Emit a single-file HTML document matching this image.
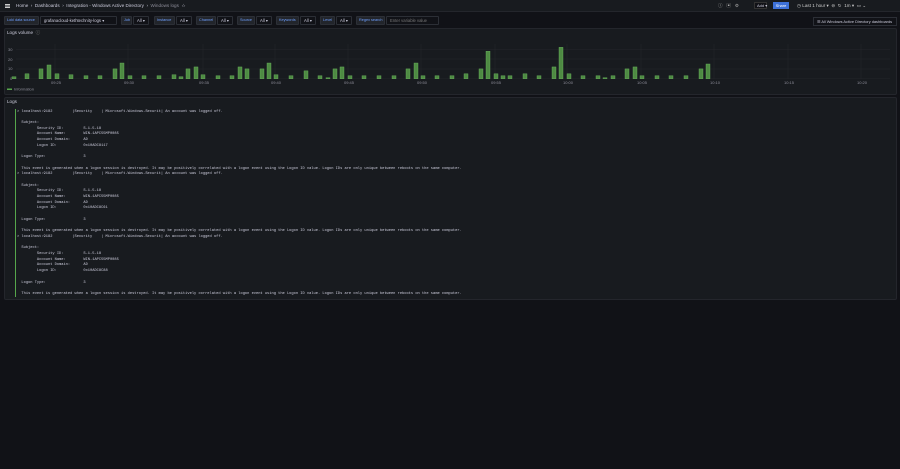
<!DOCTYPE html>
<html><head><meta charset="utf-8"><style>
*{box-sizing:border-box;margin:0;padding:0}
body{width:900px;height:469px;background:#111217;font-family:"Liberation Sans",sans-serif;color:#ccccdc;position:relative;overflow:hidden}
.a{position:absolute;white-space:nowrap}
.top{left:0;top:0;width:900px;height:12px;background:#181b1f;border-bottom:1px solid #24262c}
.t{font-size:4.6px}
.lbl,.val{white-space:nowrap;overflow:hidden}
.lbl{position:absolute;height:9px;top:16px;background:#22252b;border:1px solid #2c2f36;color:#6e9fff;font-size:3.8px;line-height:7px;padding:0 2px;border-radius:1px}
.val{position:absolute;height:9px;top:16px;background:#111217;border:1px solid #2c2f36;color:#ccccdc;font-size:4.2px;line-height:7px;padding:0 3px;border-radius:1px}
.panel{position:absolute;background:#181b1f;border:1px solid #24262c;border-radius:2px}
.mono{font-family:"Liberation Mono",monospace;font-size:3.7px;line-height:5.7px;color:#ccccdc;white-space:pre}
</style></head><body>
<div class="a top"></div>
<div class="a" style="left:5px;top:4px;width:5px;height:1px;background:#ccc;box-shadow:0 1.5px 0 #ccc,0 3px 0 #ccc"></div>
<div class="a t" style="left:16px;top:3px;color:#ccccdc">Home &nbsp;›&nbsp; Dashboards &nbsp;›&nbsp; Integration - Windows Active Directory &nbsp;›&nbsp; <span style="color:#8e8e9a">Windows logs</span> &nbsp;☆</div>
<div class="a t" style="left:718px;top:3px;color:#aaa">ⓘ &nbsp; ▣ &nbsp; ⚙</div>
<div class="a" style="left:754px;top:2px;width:13px;height:7px;background:#111217;border:1px solid #333;font-size:4px;line-height:5px;padding-left:2px">Add ▾</div>
<div class="a" style="left:773px;top:2px;width:16px;height:7px;background:#3d71d9;font-size:4px;line-height:7px;color:#fff;text-align:center">Share</div>
<div class="a t" style="left:797px;top:3px;color:#ccc">◷ Last 1 hour ▾ &nbsp;⊖ &nbsp;↻ &nbsp;1m ▾ &nbsp;▭ ⌄</div>

<div class="lbl" style="left:4px;width:35px">Loki data source</div>
<div class="val" style="left:40px;width:77px">grafanacloud-kethtechnity-logs ▾</div>
<div class="lbl" style="left:121px;width:11px">Job</div>
<div class="val" style="left:133px;width:16px">All ▾</div>
<div class="lbl" style="left:154px;width:21px">Instance</div>
<div class="val" style="left:176px;width:16px">All ▾</div>
<div class="lbl" style="left:196px;width:20px">Channel</div>
<div class="val" style="left:217px;width:16px">All ▾</div>
<div class="lbl" style="left:237px;width:18px">Source</div>
<div class="val" style="left:256px;width:16px">All ▾</div>
<div class="lbl" style="left:276px;width:23px">Keywords</div>
<div class="val" style="left:300px;width:16px">All ▾</div>
<div class="lbl" style="left:320px;width:15px">Level</div>
<div class="val" style="left:336px;width:16px">All ▾</div>
<div class="lbl" style="left:356px;width:29px">Regex search</div>
<div class="val" style="left:386px;width:53px;color:#777">Enter variable value</div>
<div class="a" style="left:813px;top:17px;width:84px;height:9px;background:#111217;border:1px solid #2c2f36;font-size:3.9px;line-height:7px;padding-left:3px;overflow:hidden">☰ All Windows Active Directory dashboards</div>

<div class="panel" style="left:4px;top:28px;width:893px;height:67px"></div>
<div class="a t" style="left:7px;top:30px">Logs volume &nbsp;<span style="color:#888">ⓘ</span></div>
<svg class="a" style="left:0;top:0" width="900" height="100">
<g stroke="#24262c" stroke-width="0.5">
<line x1="16" y1="49.5" x2="890" y2="49.5"/><line x1="16" y1="59" x2="890" y2="59"/><line x1="16" y1="69" x2="890" y2="69"/><line x1="16" y1="78.7" x2="890" y2="78.7"/>
<line x1="55" y1="44" x2="55" y2="79"/><line x1="128" y1="44" x2="128" y2="79"/><line x1="203" y1="44" x2="203" y2="79"/><line x1="275" y1="44" x2="275" y2="79"/><line x1="348" y1="44" x2="348" y2="79"/><line x1="421" y1="44" x2="421" y2="79"/><line x1="495" y1="44" x2="495" y2="79"/><line x1="567" y1="44" x2="567" y2="79"/><line x1="641" y1="44" x2="641" y2="79"/><line x1="714" y1="44" x2="714" y2="79"/><line x1="788" y1="44" x2="788" y2="79"/><line x1="861" y1="44" x2="861" y2="79"/>
</g>
<g fill="#8e8e9a" font-size="4" font-family="Liberation Sans">
<text x="8" y="51">30</text><text x="8" y="61">20</text><text x="8" y="70">10</text><text x="10" y="80">0</text>
<text x="51" y="84">09:25</text><text x="124" y="84">09:30</text><text x="199" y="84">09:35</text><text x="271" y="84">09:40</text><text x="344" y="84">09:45</text><text x="417" y="84">09:50</text><text x="491" y="84">09:55</text><text x="563" y="84">10:00</text><text x="637" y="84">10:05</text><text x="710" y="84">10:10</text><text x="784" y="84">10:15</text><text x="857" y="84">10:20</text>
<text x="14" y="90.5">Information</text>
</g>
<rect x="7" y="88.5" width="5" height="1.5" fill="#56a64b"/>
<g fill="#4e8a43" stroke="#6cb85e" stroke-width="0.4" id="bars"></g>
</svg>

<div class="panel" style="left:4px;top:97px;width:893px;height:203px"></div>
<div class="a t" style="left:7px;top:99px">Logs</div>
<div class="a" style="left:15px;top:109px;width:1px;height:188px;background:#56a64b"></div>
<div class="a mono" style="left:17px;top:109.5px">&gt; localhost:9182         |Security    | Microsoft-Windows-Securit| An account was logged off.

  Subject:
         Security ID:         S-1-5-18
         Account Name:        WIN-1APC55MP0085
         Account Domain:      AD
         Logon ID:            0x10ADC8117

  Logon Type:                 3

  This event is generated when a logon session is destroyed. It may be positively correlated with a logon event using the Logon ID value. Logon IDs are only unique between reboots on the same computer.
&gt; localhost:9182         |Security    | Microsoft-Windows-Securit| An account was logged off.

  Subject:
         Security ID:         S-1-5-18
         Account Name:        WIN-1APC55MP0085
         Account Domain:      AD
         Logon ID:            0x10ADC8C61

  Logon Type:                 3

  This event is generated when a logon session is destroyed. It may be positively correlated with a logon event using the Logon ID value. Logon IDs are only unique between reboots on the same computer.
&gt; localhost:9182         |Security    | Microsoft-Windows-Securit| An account was logged off.

  Subject:
         Security ID:         S-1-5-18
         Account Name:        WIN-1APC55MP0085
         Account Domain:      AD
         Logon ID:            0x10ADC8C88

  Logon Type:                 3

  This event is generated when a logon session is destroyed. It may be positively correlated with a logon event using the Logon ID value. Logon IDs are only unique between reboots on the same computer.</div>
<script>
var d=[[14,2],[27,5],[41,10],[49,14],[57,5],[71,4],[86,3],[100,3],[115,10],[122,16],[130,3],[144,3],[159,3],[174,4],[181,2],[188,10],[196,12],[203,4],[218,3],[232,3],[240,12],[247,10],[262,10],[269,16],[276,4],[291,3],[306,8],[320,3],[328,1],[335,10],[342,12],[350,3],[364,3],[379,3],[394,3],[408,10],[416,16],[423,3],[437,3],[452,3],[466,5],[481,10],[488,28],[496,5],[503,3],[510,3],[525,5],[539,3],[554,12],[561,32],[569,5],[583,3],[598,3],[605,1],[613,3],[627,10],[635,12],[642,3],[657,3],[671,3],[686,3],[701,10],[708,15]];
var g=document.getElementById('bars'),s='';
d.forEach(function(b){var h=b[1]*0.98;s+='<rect x="'+(b[0]-2)+'" y="'+(78.7-h)+'" width="4" height="'+h+'"/>';});
g.innerHTML=s;
</script>
</body></html>
